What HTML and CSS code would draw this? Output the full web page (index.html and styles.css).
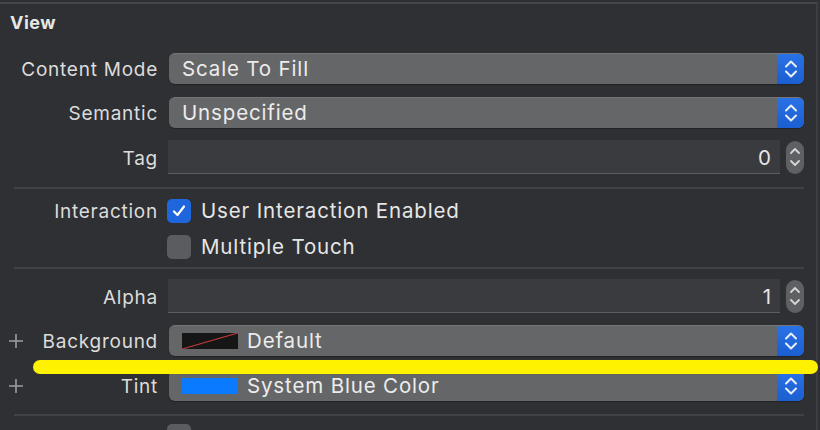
FILE: index.html
```html
<!DOCTYPE html>
<html>
<head>
<meta charset="utf-8">
<link rel="stylesheet" href="styles.css">
</head>
<body>
<div class="panel">
  <div class="title">View</div>

  <div class="row r-content">
    <div class="label">Content Mode</div>
    <div class="popup"><span class="ptext">Scale To Fill</span>
      <span class="pbtn"><svg width="14" height="20" viewBox="0 0 14 20"><path d="M2 7.5 L7 2.5 L12 7.5 M2 12.5 L7 17.5 L12 12.5" fill="none" stroke="#e8eefc" stroke-width="2" stroke-linecap="round" stroke-linejoin="round"/></svg></span>
    </div>
  </div>

  <div class="row r-semantic">
    <div class="label">Semantic</div>
    <div class="popup"><span class="ptext">Unspecified</span>
      <span class="pbtn"><svg width="14" height="20" viewBox="0 0 14 20"><path d="M2 7.5 L7 2.5 L12 7.5 M2 12.5 L7 17.5 L12 12.5" fill="none" stroke="#e8eefc" stroke-width="2" stroke-linecap="round" stroke-linejoin="round"/></svg></span>
    </div>
  </div>

  <div class="row r-tag">
    <div class="label">Tag</div>
    <div class="fieldwrap">
      <div class="field">0</div>
      <div class="stepper"><svg width="12" height="24" viewBox="0 0 12 24"><path d="M2 8 L6 4 L10 8 M2 16 L6 20 L10 16" fill="none" stroke="#d6d6d6" stroke-width="1.8" stroke-linecap="round" stroke-linejoin="round"/></svg></div>
    </div>
  </div>

  <div class="sep s1"></div>

  <div class="row r-check1">
    <div class="label">Interaction</div>
    <div class="check"><span class="box on"><svg width="16" height="16" viewBox="0 0 16 16"><path d="M3 8.5 L6.5 12 L13 3.5" fill="none" stroke="#fff" stroke-width="2.2" stroke-linecap="round" stroke-linejoin="round"/></svg></span><span class="ctext">User Interaction Enabled</span></div>
  </div>

  <div class="row r-check2">
    <div class="label"></div>
    <div class="check"><span class="box"></span><span class="ctext">Multiple Touch</span></div>
  </div>

  <div class="sep s2"></div>

  <div class="row r-alpha">
    <div class="label">Alpha</div>
    <div class="fieldwrap">
      <div class="field">1</div>
      <div class="stepper"><svg width="12" height="24" viewBox="0 0 12 24"><path d="M2 8 L6 4 L10 8 M2 16 L6 20 L10 16" fill="none" stroke="#d6d6d6" stroke-width="1.8" stroke-linecap="round" stroke-linejoin="round"/></svg></div>
    </div>
  </div>

  <div class="row r-bg">
    <div class="label plus-label"><svg class="plus" width="16" height="16" viewBox="0 0 16 16"><path d="M8 1 V15 M1 8 H15" stroke="#9d9d9f" stroke-width="1.6"/></svg><span>Background</span></div>
    <div class="popup"><span class="swatch def"><svg width="56" height="16" viewBox="0 0 56 16" preserveAspectRatio="none"><path d="M0 16 L56 0" stroke="#c03a3a" stroke-width="1.2"/></svg></span><span class="ptext sw">Default</span>
      <span class="pbtn"><svg width="14" height="20" viewBox="0 0 14 20"><path d="M2 7.5 L7 2.5 L12 7.5 M2 12.5 L7 17.5 L12 12.5" fill="none" stroke="#e8eefc" stroke-width="2" stroke-linecap="round" stroke-linejoin="round"/></svg></span>
    </div>
  </div>

  <div class="row r-tint">
    <div class="label plus-label"><svg class="plus" width="16" height="16" viewBox="0 0 16 16"><path d="M8 1 V15 M1 8 H15" stroke="#9d9d9f" stroke-width="1.6"/></svg><span>Tint</span></div>
    <div class="popup"><span class="swatch blue"></span><span class="ptext sw">System Blue Color</span>
      <span class="pbtn"><svg width="14" height="20" viewBox="0 0 14 20"><path d="M2 7.5 L7 2.5 L12 7.5 M2 12.5 L7 17.5 L12 12.5" fill="none" stroke="#e8eefc" stroke-width="2" stroke-linecap="round" stroke-linejoin="round"/></svg></span>
    </div>
  </div>

  <div class="sep s3"></div>

  <div class="row r-partial">
    <div class="label"></div>
    <div class="check"><span class="box"></span></div>
  </div>

  <div class="highlight"></div>
</div>
</body>
</html>
```

FILE: styles.css
```css
* { box-sizing: border-box; }
html, body { margin: 0; padding: 0; }
body {
  width: 820px;
  height: 430px;
  overflow: hidden;
  background: #2f3033;
  font-family: "Inter", "Liberation Sans", sans-serif;
  color: #dedede;
}
.panel {
  position: relative;
  height: 430px;
  border-top: 2px solid #444548;
  margin-top: 2px;
  border-right: 2px solid #3d3e41;
  width: 818px;
}
.title {
  font-weight: 700;
  font-size: 18px;
  letter-spacing: 0.5px;
  padding-left: 10px;
  height: 40px;
  line-height: 38px;
  color: #e6e6e6;
}
.row {
  display: grid;
  grid-template-columns: 158px 636px;
  column-gap: 10px;
  align-items: center;
}
.label {
  text-align: right;
  font-size: 19px;
  letter-spacing: 0.75px;
  color: #dcdcdc;
  white-space: nowrap;
  padding-top: 2px;
}
.plus-label {
  display: flex;
  justify-content: space-between;
  align-items: center;
  padding-left: 8px;
}
.plus { display: block; margin-top: -2px; }
.r-content { margin-top: 9px; height: 31px; }
.r-semantic { margin-top: 13px; height: 31px; }
.r-tag { margin-top: 12px; height: 34px; }
.s1 { margin-top: 13px; }
.r-check1 { margin-top: 9px; height: 24px; }
.r-check2 { margin-top: 12px; height: 24px; }
.s2 { margin-top: 9px; }
.r-alpha { margin-top: 10px; height: 34px; }
.r-bg { margin-top: 12px; height: 31px; }
.r-tint { margin-top: 14px; height: 31px; }
.s3 { margin-top: 13px; }
.r-partial { margin-top: 8px; height: 24px; }

.popup {
  height: 31px;
  margin-left: 1px;
  width: 635px;
  background: #656668;
  border-radius: 6px;
  border-top: 1px solid #747577;
  display: flex;
  align-items: center;
  position: relative;
  overflow: hidden;
  box-shadow: 0 1px 1px rgba(0,0,0,0.3);
}
.ptext {
  font-size: 20.5px;
  letter-spacing: 0.85px;
  color: #ececec;
  padding-left: 13px;
  flex: 1;
  line-height: 30px;
}
.ptext.sw { padding-left: 9px; }
.pbtn {
  width: 27px;
  height: 31px;
  margin-top: -1px;
  background: linear-gradient(#2a72e6, #1b5fd1);
  display: flex;
  align-items: center;
  justify-content: center;
}
.swatch {
  width: 56px;
  height: 16px;
  margin-left: 13px;
  display: block;
  flex: none;
}
.swatch svg { display: block; }
.swatch.def { background: #161616; }
.swatch.blue { background: #0a7aff; }

.fieldwrap {
  display: flex;
  align-items: center;
  width: 636px;
}
.field {
  width: 613px;
  height: 34px;
  background: #3a3b3e;
  border-bottom: 1px solid #5c5d60;
  text-align: right;
  font-size: 20.5px;
  color: #e6e6e6;
  line-height: 35px;
  padding-right: 9px;
}
.stepper {
  margin-left: 6px;
  width: 18px;
  height: 33px;
  border-radius: 9px;
  background: #5f6063;
  display: flex;
  align-items: center;
  justify-content: center;
}

.sep {
  height: 2px;
  background: #414245;
  margin-left: 14px;
  width: 790px;
}

.check {
  display: flex;
  align-items: center;
  margin-left: -1px;
}
.box {
  width: 24px;
  height: 24px;
  border-radius: 5px;
  background: #5b5c5f;
  display: flex;
  align-items: center;
  justify-content: center;
  flex: none;
}
.box.on { background: #1f66dc; }
.ctext {
  font-size: 20.5px;
  letter-spacing: 0.85px;
  color: #e6e6e6;
  margin-left: 10px;
}

.highlight {
  position: absolute;
  left: 33px;
  top: 356px;
  width: 785px;
  height: 14px;
  border-radius: 7px;
  background: #fff200;
}
```
